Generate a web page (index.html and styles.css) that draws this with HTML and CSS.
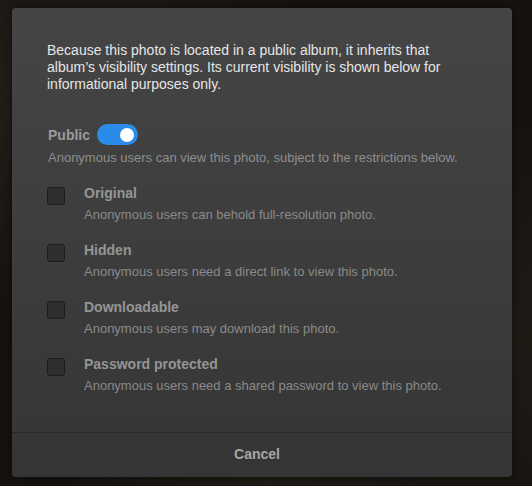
FILE: index.html
```html
<!DOCTYPE html>
<html>
<head>
<meta charset="utf-8">
<link rel="stylesheet" href="styles.css">
</head>
<body>
<div class="modal">
  <div class="content">
    <p class="intro">Because this photo is located in a public album, it inherits that album’s visibility settings. Its current visibility is shown below for informational purposes only.</p>
    <div class="public-row">
      <span class="public-label">Public</span>
      <span class="toggle"><span class="knob"></span></span>
    </div>
    <p class="public-desc">Anonymous users can view this photo, subject to the restrictions below.</p>
    <div class="options">
      <div class="option">
        <span class="checkbox"></span>
        <div class="option-text">
          <div class="option-label">Original</div>
          <div class="option-desc">Anonymous users can behold full-resolution photo.</div>
        </div>
      </div>
      <div class="option">
        <span class="checkbox"></span>
        <div class="option-text">
          <div class="option-label">Hidden</div>
          <div class="option-desc">Anonymous users need a direct link to view this photo.</div>
        </div>
      </div>
      <div class="option">
        <span class="checkbox"></span>
        <div class="option-text">
          <div class="option-label">Downloadable</div>
          <div class="option-desc">Anonymous users may download this photo.</div>
        </div>
      </div>
      <div class="option">
        <span class="checkbox"></span>
        <div class="option-text">
          <div class="option-label">Password protected</div>
          <div class="option-desc">Anonymous users need a shared password to view this photo.</div>
        </div>
      </div>
    </div>
  </div>
  <div class="footer">
    <button class="cancel">Cancel</button>
  </div>
</div>
</body>
</html>
```
FILE: styles.css
```css
html, body {
  margin: 0;
  padding: 0;
}
body {
  width: 532px;
  height: 486px;
  overflow: hidden;
  background-color: #16130f;
  background-image:
    radial-gradient(ellipse at 10% 20%, rgba(60,50,40,0.35), transparent 40%),
    radial-gradient(ellipse at 90% 70%, rgba(50,42,34,0.35), transparent 45%),
    radial-gradient(ellipse at 50% 100%, rgba(45,38,30,0.4), transparent 50%);
  font-family: "Liberation Sans", Arial, sans-serif;
  padding-top: 8px;
  padding-left: 12px;
  box-sizing: border-box;
}
.modal {
  width: 500px;
  height: 469px;
  border-radius: 4px;
  background: linear-gradient(to bottom, #454545, #353535);
  display: flex;
  flex-direction: column;
  box-shadow: 0 0 8px rgba(0,0,0,0.5);
}
.content {
  flex: 1;
  padding: 34px 35px 0 35px;
}
.intro {
  margin: 0;
  font-size: 14px;
  line-height: 17px;
  color: #e6e6e6;
}
.public-row {
  display: flex;
  align-items: center;
  margin-top: 31px;
  height: 21px;
  padding-left: 1px;
}
.public-label {
  font-size: 14px;
  font-weight: bold;
  color: #9a9a9a;
}
.toggle {
  margin-left: 7px;
  width: 41px;
  height: 21px;
  border-radius: 11px;
  background: #2a8ce8;
  display: flex;
  align-items: center;
  justify-content: flex-end;
  padding-right: 4px;
  box-sizing: border-box;
}
.knob {
  width: 14px;
  height: 14px;
  border-radius: 50%;
  background: #fff;
}
.public-desc {
  margin: 5px 0 0 1px;
  font-size: 13px;
  line-height: 16px;
  color: #8e8e8e;
}
.options {
  margin-top: 17px;
  display: flex;
  flex-direction: column;
  gap: 17px;
}
.option {
  display: flex;
  align-items: flex-start;
}
.checkbox {
  width: 18px;
  height: 18px;
  margin-top: 4px;
  box-sizing: border-box;
  border: 1px solid #1c1c1c;
  border-radius: 3px;
  background: #2e2e2e;
  flex: none;
}
.option-text {
  margin-left: 19px;
}
.option-label {
  font-size: 14px;
  line-height: 20px;
  font-weight: bold;
  color: #959595;
}
.option-desc {
  margin-top: 4px;
  font-size: 13px;
  line-height: 16px;
  color: #8a8a8a;
}
.footer {
  height: 45px;
  border-top: 1px solid #2a2a2a;
  display: flex;
  box-sizing: border-box;
}
.cancel {
  flex: 1;
  background: transparent;
  border: none;
  font-family: "Liberation Sans", Arial, sans-serif;
  font-size: 14px;
  font-weight: bold;
  color: #a5a5a5;
  padding: 0 10px 3px 0;
}
```
